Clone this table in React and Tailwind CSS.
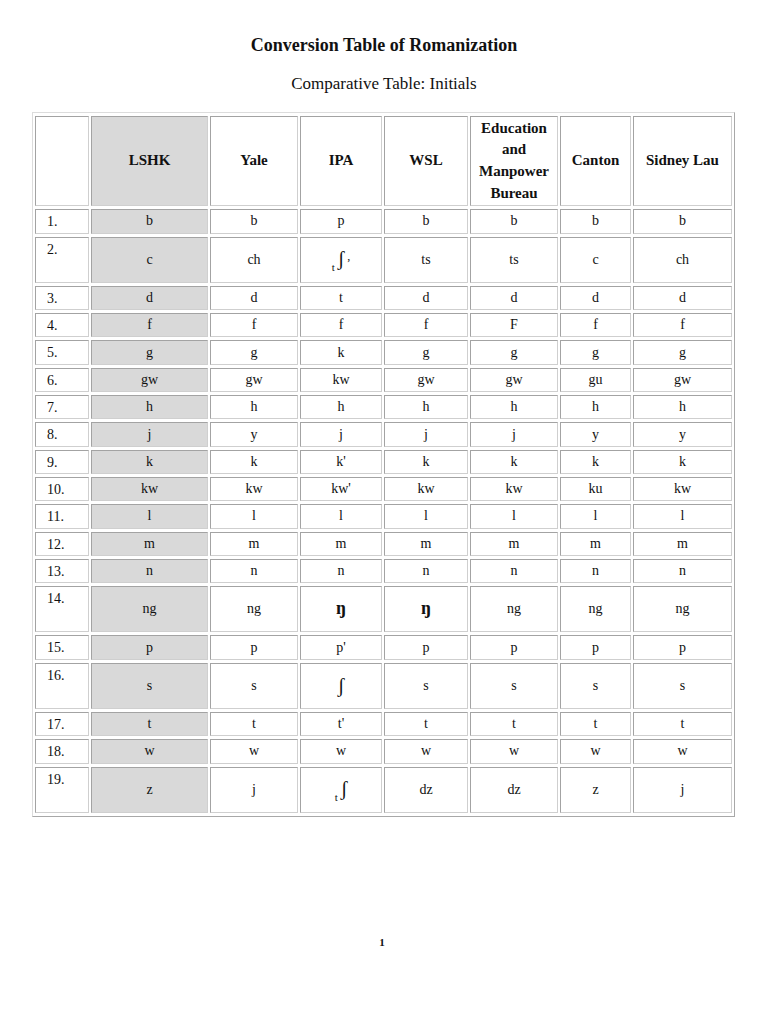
import React from "react";

const SERIF = "font-['Liberation_Serif','Times_New_Roman',serif]";

// IPA cells that need a bit of typesetting
const TSH_COMMA = (
  <span className="inline-flex items-end">
    <span className="text-[11px] leading-[11px] translate-y-[5px] mr-[3px]">t</span>
    <span className="text-[20px] leading-[20px]">ʃ</span>
    <span className="text-[12px] leading-[12px] -translate-y-[6px] ml-[3px]">,</span>
  </span>
);
const TSH = (
  <span className="inline-flex items-end">
    <span className="text-[11px] leading-[11px] translate-y-[5px] mr-[3px]">t</span>
    <span className="text-[20px] leading-[20px]">ʃ</span>
  </span>
);
const ESH = <span className="text-[20px] leading-none">ʃ</span>;
const ENG = <span className="text-[18px] leading-none font-bold">ŋ</span>;

const HEADERS = ["LSHK", "Yale", "IPA", "WSL", "Education and Manpower Bureau", "Canton", "Sidney Lau"];
const WIDTHS = ["w-[54px]", "w-[117px]", "w-[88px]", "w-[82px]", "w-[84px]", "w-[88px]", "w-[71px]", "w-[99px]"];

const ROWS = [
  { v: ["b", "b", "p", "b", "b", "b", "b"] },
  { v: ["c", "ch", TSH_COMMA, "ts", "ts", "c", "ch"], tall: true },
  { v: ["d", "d", "t", "d", "d", "d", "d"] },
  { v: ["f", "f", "f", "f", "F", "f", "f"] },
  { v: ["g", "g", "k", "g", "g", "g", "g"] },
  { v: ["gw", "gw", "kw", "gw", "gw", "gu", "gw"] },
  { v: ["h", "h", "h", "h", "h", "h", "h"] },
  { v: ["j", "y", "j", "j", "j", "y", "y"] },
  { v: ["k", "k", "k'", "k", "k", "k", "k"] },
  { v: ["kw", "kw", "kw'", "kw", "kw", "ku", "kw"] },
  { v: ["l", "l", "l", "l", "l", "l", "l"] },
  { v: ["m", "m", "m", "m", "m", "m", "m"] },
  { v: ["n", "n", "n", "n", "n", "n", "n"] },
  { v: ["ng", "ng", ENG, ENG, "ng", "ng", "ng"], tall: true },
  { v: ["p", "p", "p'", "p", "p", "p", "p"] },
  { v: ["s", "s", ESH, "s", "s", "s", "s"], tall: true },
  { v: ["t", "t", "t'", "t", "t", "t", "t"] },
  { v: ["w", "w", "w", "w", "w", "w", "w"] },
  { v: ["z", "j", TSH, "dz", "dz", "z", "j"], tall: true },
];

const cellBorder = "border border-t-[#a3a3a3] border-l-[#a3a3a3] border-b-[#cfcfcf] border-r-[#cfcfcf]";

export default function App() {
  return (
    <div className={`w-[768px] h-[1024px] bg-white text-[#111] ${SERIF}`}>
      <h1 className="pt-[35px] text-center text-[18px] font-bold leading-[20px]">
        Conversion Table of Romanization
      </h1>
      <p className="mt-[19px] text-center text-[17px] leading-[20px]">Comparative Table: Initials</p>

      <table
        className="ml-[32px] mt-[18px] w-[703px] table-fixed border-separate border-spacing-x-[2px] border-spacing-y-[3px] border border-t-[#dcdcdc] border-l-[#dcdcdc] border-b-[#a8a8a8] border-r-[#a8a8a8]"
      >
        <thead>
          <tr>
            <th className={`${WIDTHS[0]} h-[90.3px] p-0 ${cellBorder}`}></th>
            {HEADERS.map((h, i) => (
              <th
                key={h}
                className={`${WIDTHS[i + 1]} h-[90.3px] px-[6px] py-0 align-middle text-center text-[15px] font-bold leading-[21.7px] ${cellBorder} ${
                  i === 0 ? "bg-[#d9d9d9]" : ""
                }`}
              >
                {h}
              </th>
            ))}
          </tr>
        </thead>
        <tbody>
          {ROWS.map((row, r) => {
            const h = row.tall ? "h-[46.3px]" : "h-[24.3px]";
            return (
              <tr key={r}>
                <td className={`${h} p-0 pl-[11px] pt-[3px] align-top text-[14px] leading-[18px] ${cellBorder}`}>
                  {r + 1}.
                </td>
                {row.v.map((val, c) => (
                  <td
                    key={c}
                    className={`${h} p-0 align-middle text-center text-[14px] leading-[18px] ${cellBorder} ${
                      c === 0 ? "bg-[#d9d9d9]" : ""
                    }`}
                  >
                    {val}
                  </td>
                ))}
              </tr>
            );
          })}
        </tbody>
      </table>

      <div className="mt-[120px] text-center text-[11px] font-bold leading-none pr-[4px]">1</div>
    </div>
  );
}
